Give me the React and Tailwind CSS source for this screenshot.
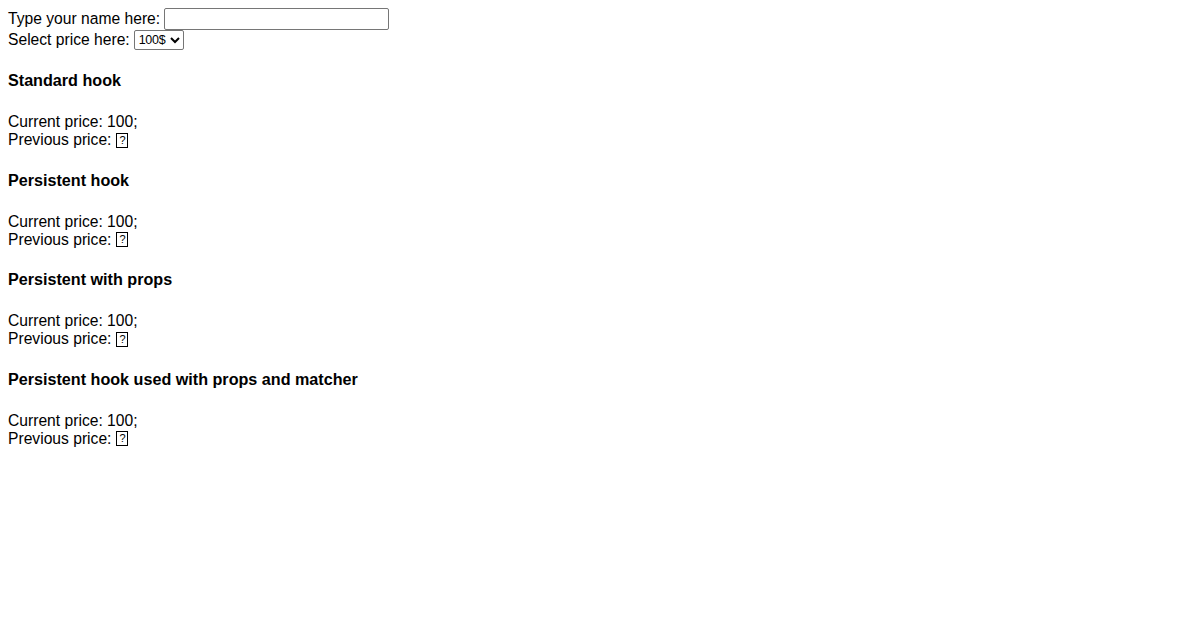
import { useState } from 'react'

const sections = [
  'Standard hook',
  'Persistent hook',
  'Persistent with props',
  'Persistent hook used with props and matcher',
]

function Missing() {
  return (
    <span className="inline-block h-[15px] w-[12px] border border-black text-center text-[11px] leading-[13px]">
      ?
    </span>
  )
}

export default function App() {
  const [name, setName] = useState('')
  const [price, setPrice] = useState('100')

  return (
    <div className="min-h-screen bg-white p-2 font-['Liberation_Sans',Arial,sans-serif] text-[15.65px] leading-[normal] text-black">
      <div className="flex h-[22px] items-center gap-[4px]">
        <span>Type your name here:</span>
        <input
          value={name}
          onChange={(e) => setName(e.target.value)}
          className="h-[22px] w-[225px] rounded-[2px] border border-[#767676] px-[2px] text-[13.33px]"
        />
      </div>
      <div className="flex h-[20px] items-center gap-[4px]">
        <span>Select price here:</span>
        <select
          value={price}
          onChange={(e) => setPrice(e.target.value)}
          className="h-[20px] w-[50px] rounded-[2px] border border-[#767676] px-0 text-[12.5px] tracking-[-0.3px]"
        >
          <option value="100">100$</option>
          <option value="200">200$</option>
          <option value="300">300$</option>
        </select>
      </div>

      {sections.map((title) => (
        <div key={title}>
          <h4 className="mt-[21px] mb-[22px] text-[16.15px] leading-[19px] font-bold">{title}</h4>
          <div className="h-[19px] leading-[19px]">Current price: {price};</div>
          <div className="flex h-[18.5px] items-center gap-[5px]">
            <span>Previous price:</span>
            <Missing />
          </div>
        </div>
      ))}
    </div>
  )
}
